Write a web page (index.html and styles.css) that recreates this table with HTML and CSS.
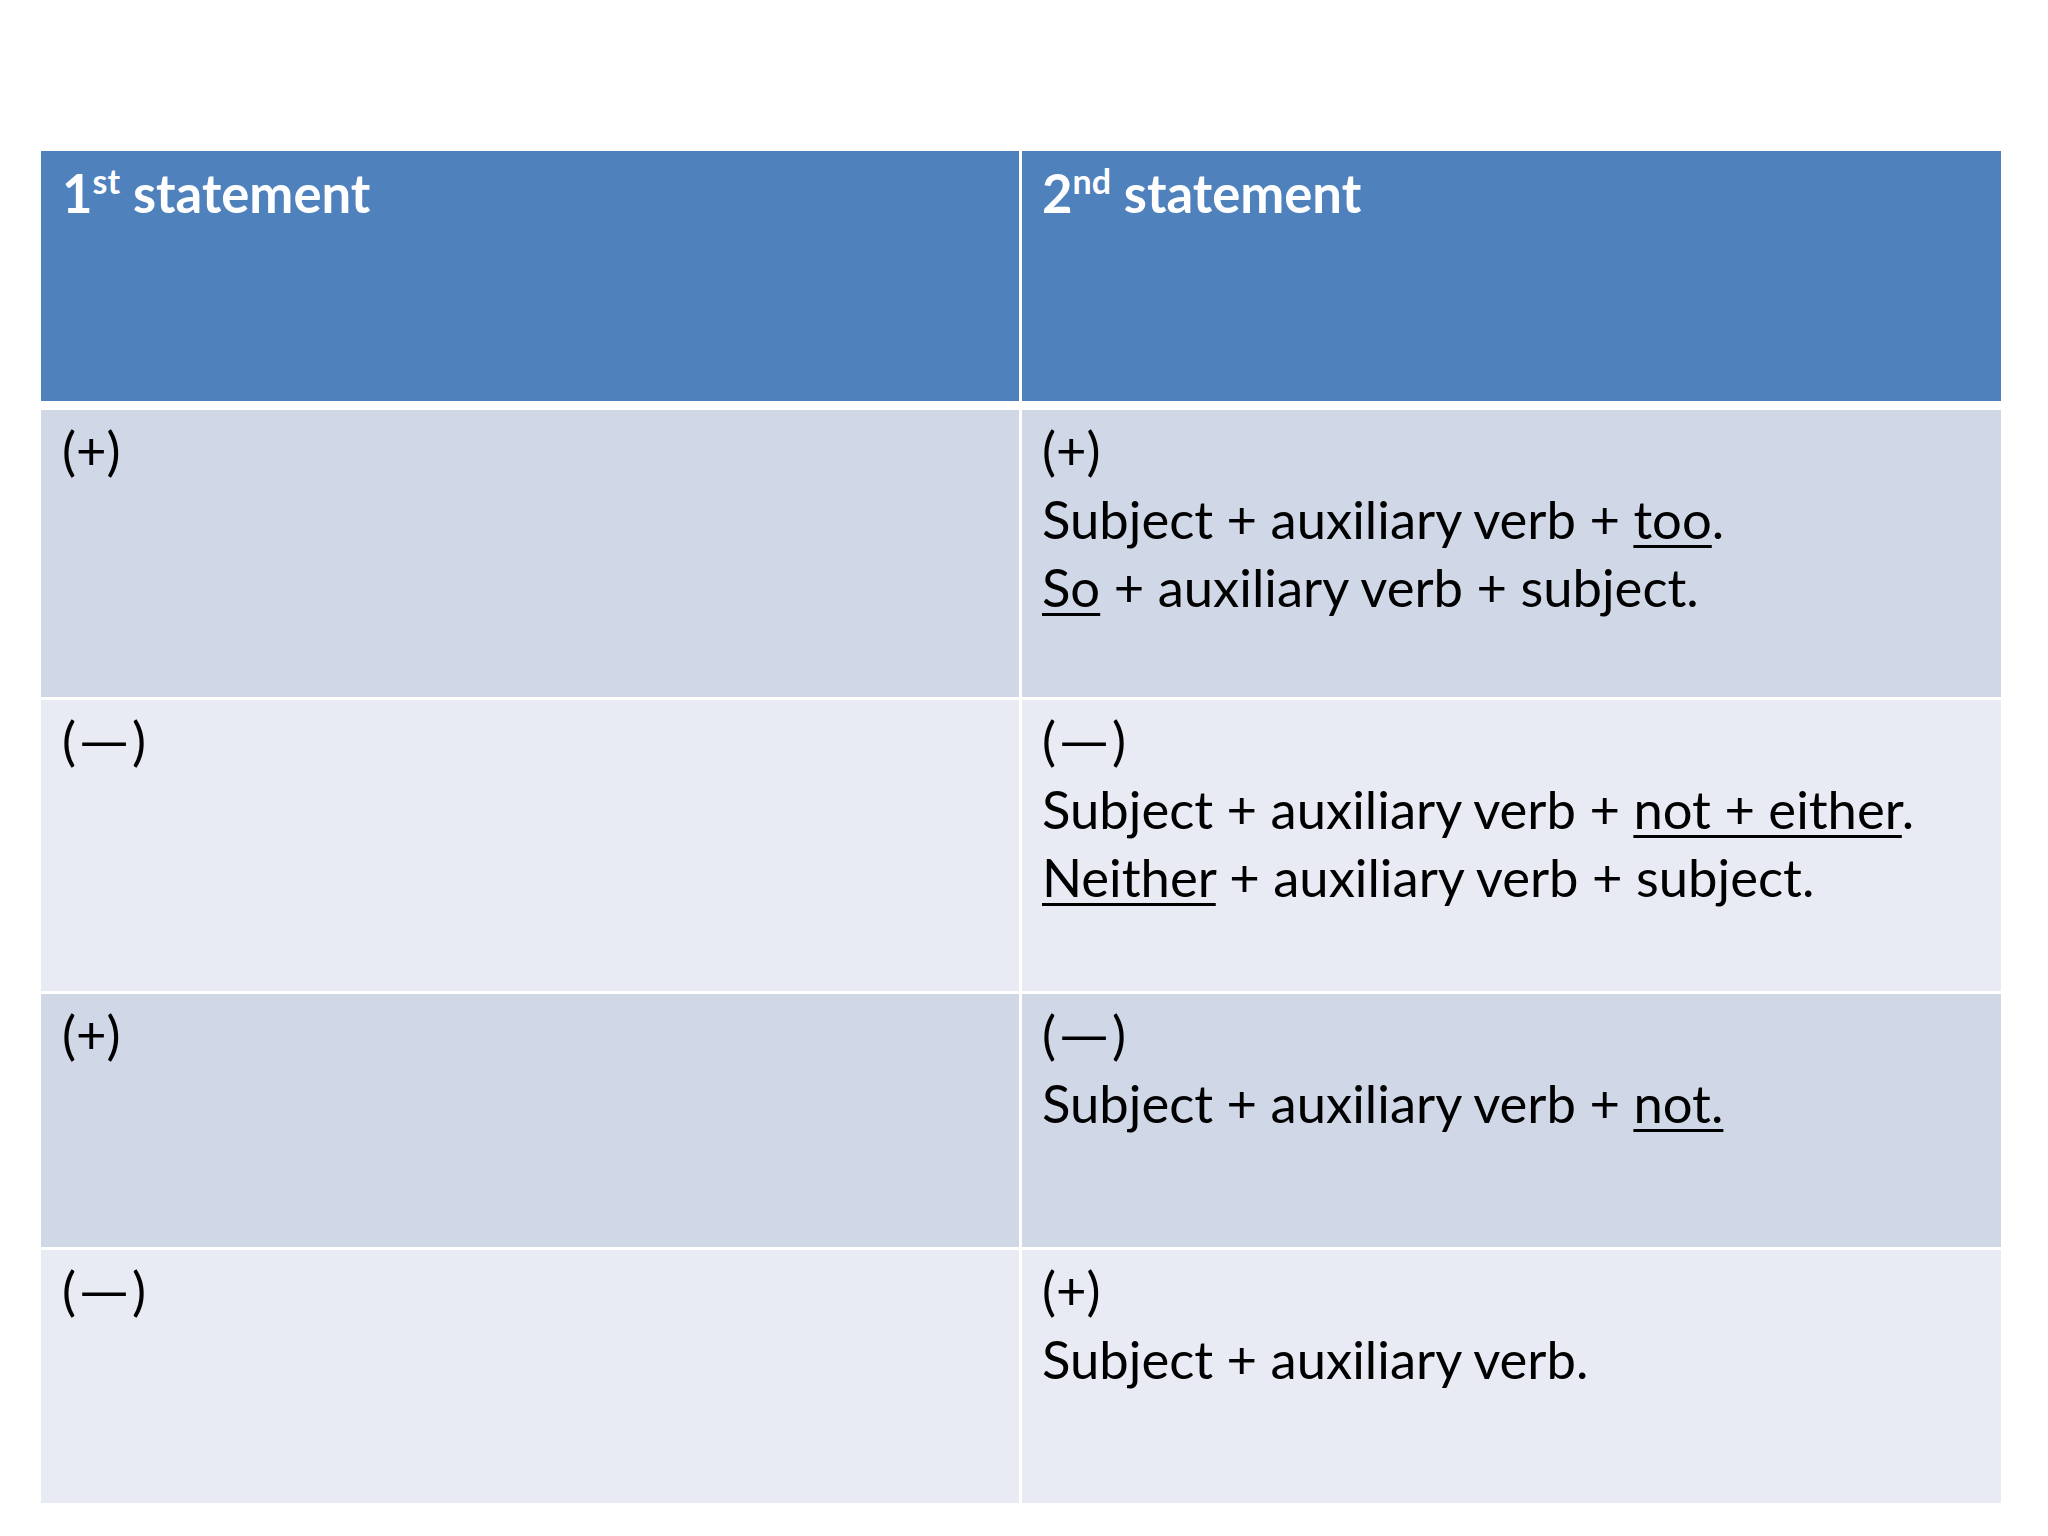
FILE: index.html
```html
<!DOCTYPE html>
<html lang="en">
<head>
<meta charset="utf-8">
<title>Statements</title>
<link rel="stylesheet" href="styles.css">
</head>
<body>
<div class="slide">
  <div class="table">
    <div class="row head">
      <div class="cell"><p>1<sup>st</sup> statement</p></div>
      <div class="cell"><p>2<sup>nd</sup> statement</p></div>
    </div>
    <div class="row odd r1">
      <div class="cell"><p>(+)</p></div>
      <div class="cell">
        <p>(+)</p>
        <p>Subject + auxiliary verb + <u>too</u>.</p>
        <p><u>So</u> + auxiliary verb + subject.</p>
      </div>
    </div>
    <div class="row even r2">
      <div class="cell"><p>(<span class="dash">—</span>)</p></div>
      <div class="cell">
        <p>(<span class="dash">—</span>)</p>
        <p>Subject + auxiliary verb + <u>not + either</u>.</p>
        <p><u>Neither</u> + auxiliary verb + subject.</p>
      </div>
    </div>
    <div class="row odd r3">
      <div class="cell"><p>(+)</p></div>
      <div class="cell">
        <p>(<span class="dash">—</span>)</p>
        <p>Subject + auxiliary verb + <u>not.</u></p>
      </div>
    </div>
    <div class="row even r4">
      <div class="cell"><p>(<span class="dash">—</span>)</p></div>
      <div class="cell">
        <p>(+)</p>
        <p>Subject + auxiliary verb.</p>
      </div>
    </div>
  </div>
</div>
</body>
</html>
```
FILE: styles.css
```css
html, body {
  margin: 0;
  padding: 0;
  background: #ffffff;
}
.slide {
  width: 2048px;
  height: 1536px;
  box-sizing: border-box;
  padding: 151px 0 0 41px;
  font-family: Lato, "Open Sans", sans-serif;
  font-size: 52.6px;
  line-height: 68.5px;
  color: #000000;
}
.table {
  width: 1960px;
  display: flex;
  flex-direction: column;
  gap: 3px;
}
.row {
  display: grid;
  grid-template-columns: 978px 979px;
  column-gap: 3px;
}
.cell {
  box-sizing: border-box;
  padding: 6px 20px 0 21px;
}
.row .cell + .cell {
  padding-left: 20px;
}
.cell p {
  margin: 0;
  white-space: nowrap;
}
.head {
  height: 250px;
  margin-bottom: 6px;
}
.head .cell {
  background: #4f81bd;
  color: #ffffff;
  font-weight: 700;
  padding-top: 8px;
}
.head sup {
  font-size: 34px;
  line-height: 0;
  vertical-align: 19px;
}
.odd .cell { background: #d0d8e8; }
.even .cell { background: #e9ebf4; }
.r1 { height: 287px; }
.r2 { height: 291px; }
.r3 { height: 253px; }
.r4 { height: 253px; }
u {
  text-decoration: underline;
  text-decoration-thickness: 3px;
  text-underline-offset: 6px;
}
.dash {
  display: inline-block;
  width: 56px;
  text-align: center;
  transform: scaleX(1.25);
}
```
